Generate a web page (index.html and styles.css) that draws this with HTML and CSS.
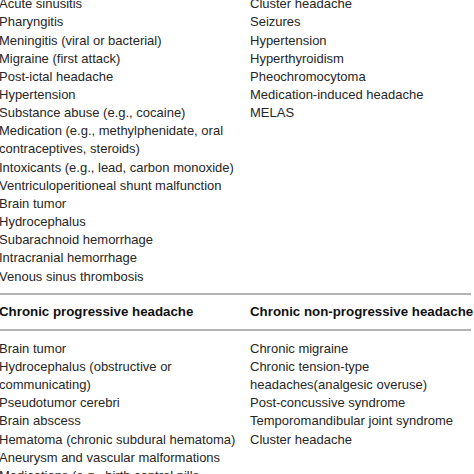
FILE: index.html
```html
<!DOCTYPE html>
<html>
<head>
<meta charset="utf-8">
<link rel="stylesheet" href="styles.css">
</head>
<body>
<div class="table">
  <div class="row body-top">
    <ul class="col left">
      <li>Acute sinusitis</li>
      <li>Pharyngitis</li>
      <li>Meningitis (viral or bacterial)</li>
      <li>Migraine (first attack)</li>
      <li>Post-ictal headache</li>
      <li>Hypertension</li>
      <li>Substance abuse (e.g., cocaine)</li>
      <li>Medication (e.g., methylphenidate, oral contraceptives, steroids)</li>
      <li>Intoxicants (e.g., lead, carbon monoxide)</li>
      <li>Ventriculoperitioneal shunt malfunction</li>
      <li>Brain tumor</li>
      <li>Hydrocephalus</li>
      <li>Subarachnoid hemorrhage</li>
      <li>Intracranial hemorrhage</li>
      <li>Venous sinus thrombosis</li>
    </ul>
    <ul class="col right">
      <li>Cluster headache</li>
      <li>Seizures</li>
      <li>Hypertension</li>
      <li>Hyperthyroidism</li>
      <li>Pheochromocytoma</li>
      <li>Medication-induced headache</li>
      <li>MELAS</li>
    </ul>
  </div>
  <div class="row head">
    <div class="col left">Chronic progressive headache</div>
    <div class="col right nowrap">Chronic non-progressive headache</div>
  </div>
  <div class="row body">
    <ul class="col left">
      <li>Brain tumor</li>
      <li>Hydrocephalus (obstructive or communicating)</li>
      <li>Pseudotumor cerebri</li>
      <li>Brain abscess</li>
      <li>Hematoma (chronic subdural hematoma)</li>
      <li>Aneurysm and vascular malformations</li>
      <li>Medications (e.g., birth control pills, steroids)</li>
    </ul>
    <ul class="col right">
      <li>Chronic migraine</li>
      <li>Chronic tension-type headaches(analgesic overuse)</li>
      <li>Post-concussive syndrome</li>
      <li>Temporomandibular joint syndrome</li>
      <li>Cluster headache</li>
    </ul>
  </div>
</div>
</body>
</html>
```
FILE: styles.css
```css
html, body {
  margin: 0;
  padding: 0;
  background: #ffffff;
  overflow: hidden;
}
body {
  font-family: "Liberation Sans", Arial, sans-serif;
  font-size: 13px;
  line-height: 18.15px;
  color: #262626;
}
.table {
  width: 472px;
  margin: -4.8px 0 0 -1px;
}
.row {
  display: grid;
  grid-template-columns: 251px 221px;
}
.col {
  margin: 0;
  padding: 0;
  list-style: none;
}
.body-top {
  padding-bottom: 7px;
  border-bottom: 2px solid #b4b4b4;
}
.head {
  padding: 8px 0 8px;
  font-size: 13.3px;
  font-weight: bold;
  color: #111111;
  border-bottom: 2px solid #b4b4b4;
}
.body {
  padding-top: 9px;
}
.nowrap {
  white-space: nowrap;
}
.left li {
  padding-right: 8px;
}
```
